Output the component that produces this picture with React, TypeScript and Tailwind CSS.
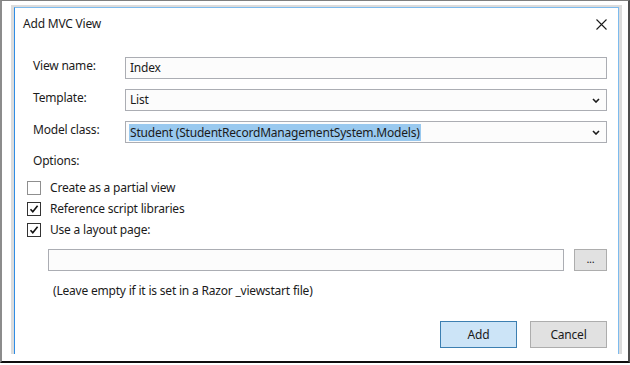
import React from 'react';

const font = "font-['Segoe_UI','Noto_Sans',sans-serif] tracking-[-0.2px]";

function Chevron() {
  return (
    <svg width="8" height="5" viewBox="0 0 8 5" className="shrink-0">
      <path d="M1 1 L4 4 L7 1" fill="none" stroke="#1b1b1b" strokeWidth="1.6" />
    </svg>
  );
}

function CheckBox({ checked, label }: { checked: boolean; label: string }) {
  return (
    <div className="flex items-center h-[14px] gap-[9px]">
      <div
        className={
          checked
            ? 'w-[14px] h-[14px] border border-[#333333] bg-white flex items-center justify-center'
            : 'w-[14px] h-[14px] border border-[#8f8f8f] bg-white'
        }
      >
        {checked && (
          <svg width="10" height="10" viewBox="0 0 10 10">
            <path d="M1.5 5.2 L3.8 7.8 L8.6 1.8" fill="none" stroke="#111111" strokeWidth="1.6" />
          </svg>
        )}
      </div>
      <span className="text-[12px] leading-[14px] text-[#1b1b1b]">{label}</span>
    </div>
  );
}

export default function App() {
  return (
    <div className={`w-[630px] h-[365px] bg-white ${font}`}>
      <div className="h-[363px] border-t border-t-[#7f7f7f] border-l-2 border-l-[#8c8c8c] border-r-2 border-r-[#4d4d4d] border-b-2 border-b-[#0f0f0f] pt-[4px] pl-[9px] pr-[6px]">
        <div className="h-[349px] border-l-[3px] border-r-[3px] border-t-2 border-[#dcdcdc]">
          <div className="h-full border-l border-t border-r border-l-[#2f8de4] border-t-[#7dbbee] border-r-[#7dbbee] bg-white flex flex-col">
            {/* title bar */}
            <div className="h-[32px] flex items-center justify-between pl-[8px] pr-[11px]">
              <span className="text-[12px] text-[#1b1b1b]">Add MVC View</span>
              <svg width="11" height="11" viewBox="0 0 11 11">
                <path d="M0.5 0.5 L10.5 10.5 M10.5 0.5 L0.5 10.5" stroke="#1b1b1b" strokeWidth="1.1" />
              </svg>
            </div>

            {/* fields */}
            <div className="mt-[17px] pl-[18px] pr-[11px] flex flex-col gap-[10px] text-[12px] text-[#1b1b1b]">
              <div className="flex h-[22px]">
                <span className="w-[92px] leading-[18px]">View name:</span>
                <div className="flex-1 border border-[#abadb3] bg-[#fcfcfc] flex items-center pl-[4px]">Index</div>
              </div>
              <div className="flex h-[22px]">
                <span className="w-[92px] leading-[18px]">Template:</span>
                <div className="flex-1 border border-[#abadb3] bg-[#fcfcfc] flex items-center justify-between pl-[4px] pr-[6px]">
                  <span>List</span>
                  <Chevron />
                </div>
              </div>
              <div className="flex h-[22px]">
                <span className="w-[92px] leading-[18px]">Model class:</span>
                <div className="flex-1 border border-[#abadb3] bg-[#fcfcfc] flex items-center justify-between pl-[3px] pr-[6px]">
                  <span className="bg-[#99c9ef] leading-[17px] pl-[1px] pr-[1px]">
                    Student (StudentRecordManagementSystem.Models)
                  </span>
                  <Chevron />
                </div>
              </div>
            </div>

            <div className="mt-[10px] pl-[18px] text-[12px] leading-[16px] text-[#1b1b1b]">Options:</div>

            <div className="mt-[12px] pl-[12px] flex flex-col gap-[7px]">
              <CheckBox checked={false} label="Create as a partial view" />
              <CheckBox checked={true} label="Reference script libraries" />
              <CheckBox checked={true} label="Use a layout page:" />
            </div>

            <div className="mt-[12px] pl-[33px] pr-[11px] flex gap-[10px] h-[22px]">
              <div className="flex-1 border border-[#abadb3] bg-[#fcfcfc]" />
              <div className="w-[33px] border border-[#adadad] bg-[#e1e1e1] flex items-center justify-center text-[11px] leading-none text-[#1b1b1b] pb-[3px]">
                ...
              </div>
            </div>

            <div className="mt-[12px] pl-[38px] text-[12px] leading-[16px] text-[#1b1b1b]">
              (Leave empty if it is set in a Razor _viewstart file)
            </div>

            <div className="mt-[22px] pr-[11px] flex justify-end gap-[13px] text-[12px] text-[#1b1b1b]">
              <div className="w-[77px] h-[27px] border border-[#3c7fb1] bg-[#cce4f7] flex items-center justify-center">Add</div>
              <div className="w-[77px] h-[27px] border border-[#adadad] bg-[#e1e1e1] flex items-center justify-center">Cancel</div>
            </div>
          </div>
        </div>
      </div>
    </div>
  );
}
